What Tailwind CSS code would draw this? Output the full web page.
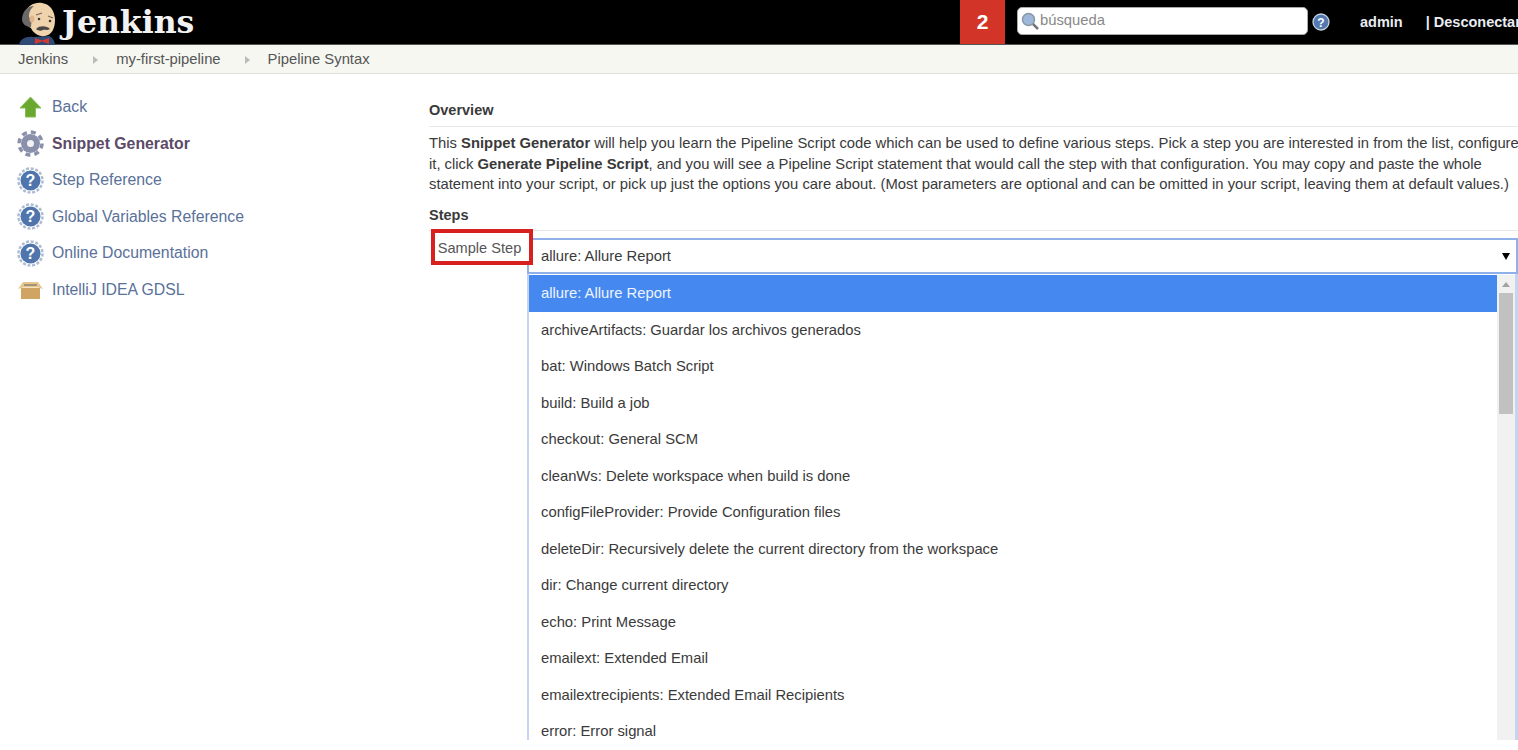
<!DOCTYPE html>
<html lang="es">
<head>
    <meta charset="UTF-8">
    <title>Pipeline Syntax</title>
    <script src="https://cdn.jsdelivr.net/npm/@tailwindcss/browser@4"></script>
</head>
<body class="bg-white w-[1518px] h-[750px] overflow-hidden font-['Liberation_Sans',Arial,sans-serif] text-[14.8px] text-[#3a3a3a]">

    <!-- top bar -->
    <header class="h-[45px] bg-black flex items-stretch border-b border-[#555]">
        <div class="w-[960px] flex items-center pl-[19px]">
            <svg class="w-[37px] h-[45px] shrink-0" viewBox="0 0 37 45">
                <path d="M0 45C1 39 7 36 14 37L30 36C33 37 36 41 36 45Z" fill="#2f4a75"/>
                <path d="M6 14C8 5 16 2 23 3C31 4 36 11 36 20C36 28 33 35 26 36C20 37 14 33 12 28C8 27 5 20 6 14Z" fill="#efd3ac"/>
                <path d="M3 20C3 12 8 6 15 6C11 9 10 13 10 17L12 19C13 22 12 24 12 27C8 27 4 25 3 20Z" fill="#6b6868"/>
                <ellipse cx="13" cy="19" rx="2.500" ry="3.500" fill="#e0b68c"/>
                <path d="M17 15l6-2M29 16l5 2" stroke="#7a6a5a" stroke-width="1.300" fill="none"/>
                <circle cx="20" cy="19" r="1.300" fill="#3d3a3a"/><circle cx="31" cy="21" r="1.300" fill="#3d3a3a"/>
                <path d="M17 29C21 25 28 26 31 29C27 31 26 29 24 30C22 31 19 31 17 29Z" fill="#4a4648"/>
                <path d="M16 38L23 40.500L30 38L30 44L23 41.500L16 44Z" fill="#d33833"/>
            </svg>
            <span class="ml-[6px] font-['DejaVu_Serif',serif] font-bold text-[31.500px] text-[#f2f2f2] leading-none">Jenkins</span>
        </div>
        <div class="w-[45px] bg-[#d33428] text-white font-bold text-[21px] flex items-center justify-center">2</div>
        <div class="flex items-center pl-[12px] pb-[3px] flex-1 min-w-0">
            <div class="w-[291px] h-[28px] shrink-0 rounded-[5px] bg-white border border-[#aaa] flex items-center pl-[3px] text-[#888]">
                <svg class="w-[18px] h-[18px] shrink-0" viewBox="0 0 18 18"><circle cx="7.500" cy="7.500" r="6" fill="#9db8d8" stroke="#8a96a6" stroke-width="1.500"/><path d="M12 12l5 5" stroke="#777" stroke-width="2.500"/></svg>
                <span class="ml-[1px]">búsqueda</span>
            </div>
            <svg class="ml-[4px] w-[18px] h-[18px] shrink-0 mt-[3px]" viewBox="0 0 18 18"><circle cx="9" cy="9" r="8" fill="#5478b0" stroke="#c8d2e2" stroke-width="1.300"/><text x="9" y="13.500" font-size="12" font-weight="700" text-anchor="middle" fill="#fff" font-family="Liberation Sans">?</text></svg>
            <span class="ml-[30px] mt-[4px] font-bold text-[14.500px] text-[#e8ecf2] shrink-0">admin</span>
            <span class="ml-[23px] mt-[4px] font-bold text-[14.500px] text-[#e8ecf2] whitespace-nowrap shrink-0">| Desconectar</span>
        </div>
    </header>

    <!-- breadcrumbs -->
    <nav class="h-[29px] pt-[1px] bg-[#f6f7f1] border-b border-[#dfe0da] flex items-center pl-[18px] text-[#555] whitespace-nowrap">
        <span>Jenkins</span>
        <span class="ml-[25px] mr-[18px] w-0 h-0 border-y-[4px] border-y-transparent border-l-[5px] border-l-[#bbb]"></span>
        <span>my-first-pipeline</span>
        <span class="ml-[24px] mr-[18px] w-0 h-0 border-y-[4px] border-y-transparent border-l-[5px] border-l-[#bbb]"></span>
        <span>Pipeline Syntax</span>
    </nav>

    <div class="flex">
        <!-- side panel -->
        <aside class="w-[429px] shrink-0 pl-[17px] pt-[15px] text-[15.800px] text-[#5a7199]">
            <a class="h-[36.500px] flex items-center gap-[8px]">
                <svg class="w-[27px] h-[24px] shrink-0" viewBox="0 0 27 24"><path d="M13.500 2L24 13h-5.500v9h-10v-9H3z" fill="#6aa82f" stroke="#88bd55" stroke-width="1"/></svg>
                <span>Back</span>
            </a>
            <a class="h-[36.500px] flex items-center gap-[8px] font-bold text-[#5c4a68]">
                <svg class="w-[27px] h-[27px] shrink-0" viewBox="0 0 27 27"><circle cx="13.500" cy="13.500" r="9.500" fill="#8a90ac"/><circle cx="13.500" cy="13.500" r="11.500" fill="none" stroke="#8a90ac" stroke-width="3.500" stroke-dasharray="5 4.030"/><circle cx="13.500" cy="13.500" r="3.500" fill="#f2f2f4"/></svg>
                <span>Snippet Generator</span>
            </a>
            <a class="h-[36.500px] flex items-center gap-[8px]">
                <svg class="w-[27px] h-[27px] shrink-0" viewBox="0 0 27 27"><circle cx="13.500" cy="13.500" r="12" fill="none" stroke="#aebcd3" stroke-width="2.500" stroke-dasharray="3 1.700"/><circle cx="13.500" cy="13.500" r="10" fill="#4f75ac"/><text x="13.500" y="19" font-size="16" font-weight="700" text-anchor="middle" fill="#fff" font-family="Liberation Sans">?</text></svg>
                <span>Step Reference</span>
            </a>
            <a class="h-[36.500px] flex items-center gap-[8px]">
                <svg class="w-[27px] h-[27px] shrink-0" viewBox="0 0 27 27"><circle cx="13.500" cy="13.500" r="12" fill="none" stroke="#aebcd3" stroke-width="2.500" stroke-dasharray="3 1.700"/><circle cx="13.500" cy="13.500" r="10" fill="#4f75ac"/><text x="13.500" y="19" font-size="16" font-weight="700" text-anchor="middle" fill="#fff" font-family="Liberation Sans">?</text></svg>
                <span>Global Variables Reference</span>
            </a>
            <a class="h-[36.500px] flex items-center gap-[8px]">
                <svg class="w-[27px] h-[27px] shrink-0" viewBox="0 0 27 27"><circle cx="13.500" cy="13.500" r="12" fill="none" stroke="#aebcd3" stroke-width="2.500" stroke-dasharray="3 1.700"/><circle cx="13.500" cy="13.500" r="10" fill="#4f75ac"/><text x="13.500" y="19" font-size="16" font-weight="700" text-anchor="middle" fill="#fff" font-family="Liberation Sans">?</text></svg>
                <span>Online Documentation</span>
            </a>
            <a class="h-[36.500px] flex items-center gap-[8px]">
                <svg class="w-[27px] h-[24px] shrink-0" viewBox="0 0 27 24"><path d="M4 10h19v11H4z" fill="#d0a463"/><path d="M1 11l5-7h15l5 7-5-1.500H6z" fill="#e6c68d"/><path d="M7 7h13" stroke="#a39478" stroke-width="2"/></svg>
                <span>IntelliJ IDEA GDSL</span>
            </a>
        </aside>

        <!-- main -->
        <main class="flex-1 min-w-0 pt-[27px]">
            <h3 class="font-bold text-[14.500px] text-[#3a3a3a] leading-[18px] pb-[7px] border-b border-[#e8e8e8]">Overview</h3>
            <p class="mt-[6px] leading-[20.500px] whitespace-nowrap">This <b>Snippet Generator</b> will help you learn the Pipeline Script code which can be used to define various steps. Pick a step you are interested in from the list, configure<br>it, click <b>Generate Pipeline Script</b>, and you will see a Pipeline Script statement that would call the step with that configuration. You may copy and paste the whole<br>statement into your script, or pick up just the options you care about. (Most parameters are optional and can be omitted in your script, leaving them at default values.)</p>
            <h3 class="mt-[11px] font-bold text-[14.500px] text-[#3a3a3a] leading-[18px] pb-[6px] border-b border-[#e8e8e8]">Steps</h3>
            <div class="flex items-start">
                <div class="ml-[2px] mt-[-2px] w-[102px] h-[36px] shrink-0 border-[4px] border-[#d8201f] bg-white flex items-center justify-center pr-[5px] pt-[5px] text-[14.600px] text-[#555] relative z-10">Sample Step</div>
                <div class="w-[991px] ml-[-6px] mt-[7px] shrink-0">
                    <div class="h-[36px] pt-[1px] border-2 border-[#8fb0e8] bg-white flex items-center justify-between pl-[12px] pr-[6px]">
                        <span>allure: Allure Report</span>
                        <span class="w-0 h-0 border-x-[4px] border-x-transparent border-t-[7px] border-t-black"></span>
                    </div>
                    <div class="flex border-l-2 border-r-[3px] border-[#c5d5f0] h-[466.500px] pt-[1.500px] overflow-hidden">
                        <ul class="flex-1 min-w-0">
                            <li class="h-[36.500px] bg-[#4589f0] text-[#eef4ff] pl-[12px] flex items-center">allure: Allure Report</li>
                            <li class="h-[36.500px] pl-[12px] flex items-center">archiveArtifacts: Guardar los archivos generados</li>
                            <li class="h-[36.500px] pl-[12px] flex items-center">bat: Windows Batch Script</li>
                            <li class="h-[36.500px] pl-[12px] flex items-center">build: Build a job</li>
                            <li class="h-[36.500px] pl-[12px] flex items-center">checkout: General SCM</li>
                            <li class="h-[36.500px] pl-[12px] flex items-center">cleanWs: Delete workspace when build is done</li>
                            <li class="h-[36.500px] pl-[12px] flex items-center">configFileProvider: Provide Configuration files</li>
                            <li class="h-[36.500px] pl-[12px] flex items-center">deleteDir: Recursively delete the current directory from the workspace</li>
                            <li class="h-[36.500px] pl-[12px] flex items-center">dir: Change current directory</li>
                            <li class="h-[36.500px] pl-[12px] flex items-center">echo: Print Message</li>
                            <li class="h-[36.500px] pl-[12px] flex items-center">emailext: Extended Email</li>
                            <li class="h-[36.500px] pl-[12px] flex items-center">emailextrecipients: Extended Email Recipients</li>
                            <li class="h-[36.500px] pl-[12px] flex items-center">error: Error signal</li>
                        </ul>
                        <div class="w-[18px] shrink-0 bg-[#f1f1f1] relative">
                            <span class="absolute left-[5px] top-[7px] w-0 h-0 border-x-[4px] border-x-transparent border-b-[5px] border-b-[#a3a3a3]"></span>
                            <div class="mt-[18px] h-[121px] bg-[#c1c1c1] mx-[2px]"></div>
                        </div>
                    </div>
                </div>
            </div>
        </main>
    </div>

</body>
</html>
